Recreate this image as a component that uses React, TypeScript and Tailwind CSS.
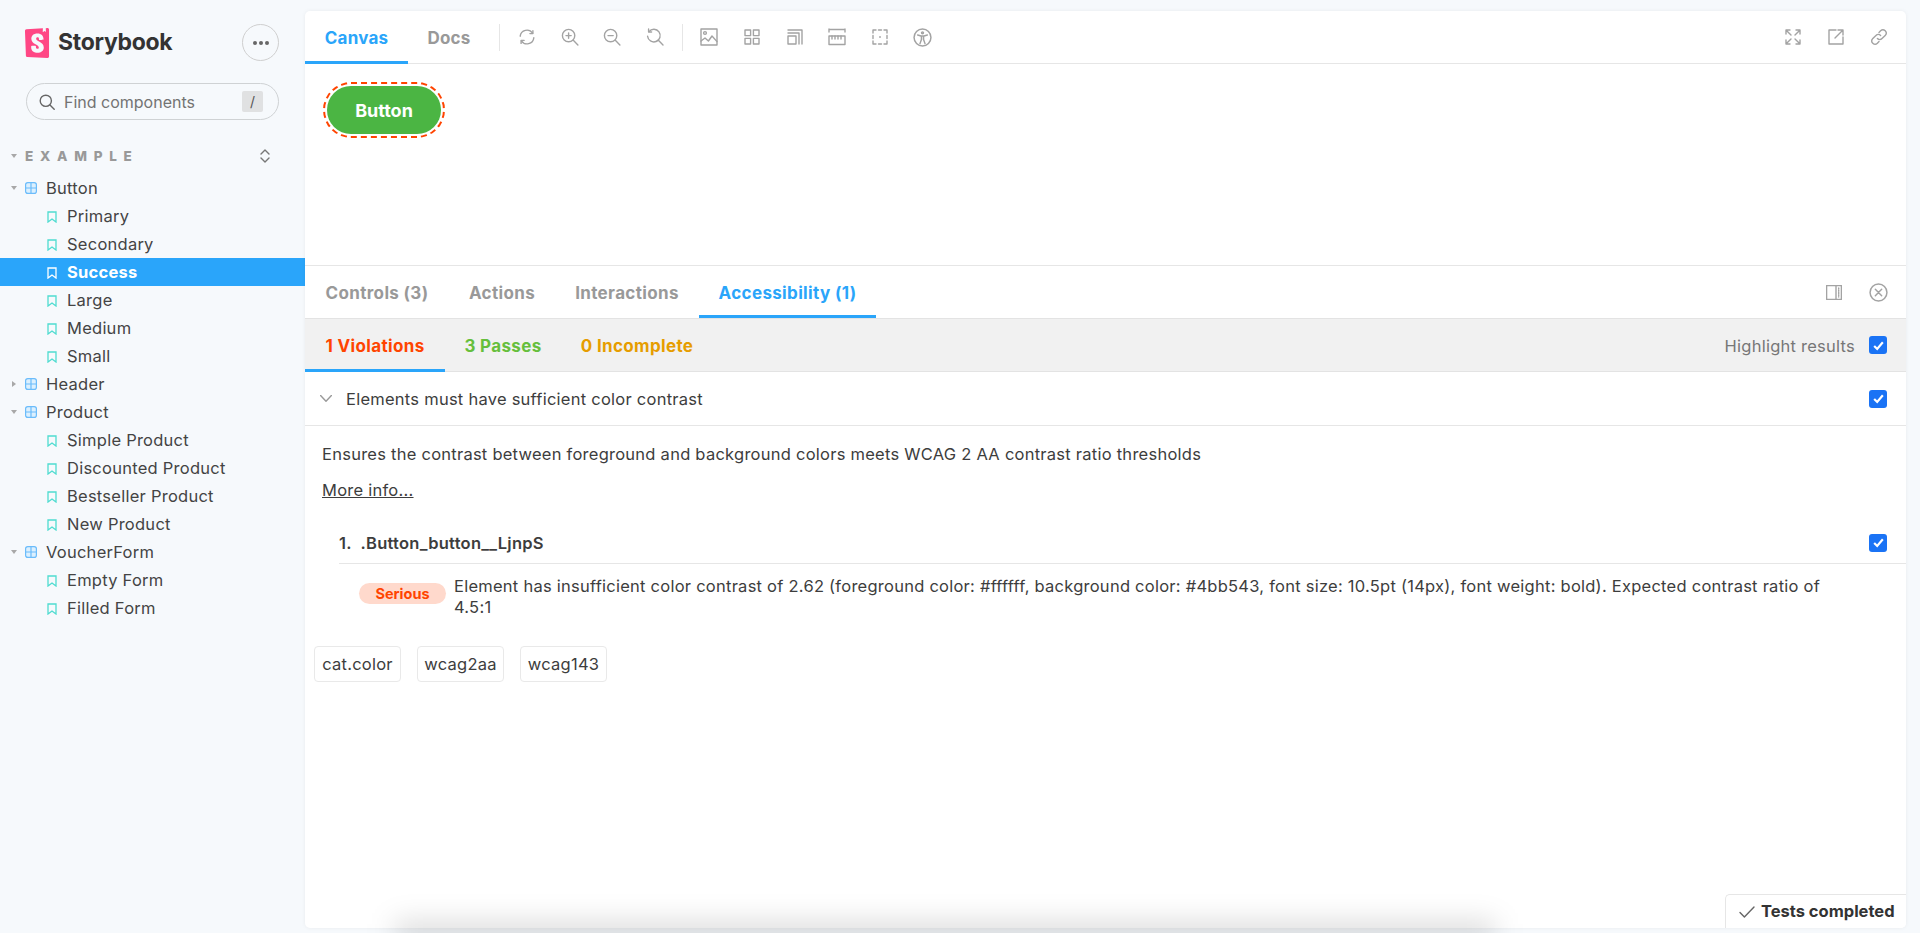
import { SiStorybook } from "react-icons/si";
import type { ReactNode } from "react";

const stroke = {
  fill: "none",
  stroke: "currentColor",
  strokeWidth: 1.4,
  strokeLinecap: "round" as const,
  strokeLinejoin: "round" as const,
};

function Ico({ children, className = "w-[18px] h-[18px]" }: { children: ReactNode; className?: string }) {
  return (
    <svg viewBox="0 0 18 18" className={className} {...stroke}>
      {children}
    </svg>
  );
}

const toolbarLeft: ReactNode[] = [
  <Ico key="sync">
    <path d="M2.2 8.2A6.8 6.8 0 0 1 14.6 5.2M15.8 9.8A6.8 6.8 0 0 1 3.4 12.8" />
    <path d="M14.9 2.6v3h-3M3.1 15.4v-3h3" />
  </Ico>,
  <Ico key="zoomin">
    <circle cx="7.6" cy="7.6" r="6.2" />
    <path d="M12.3 12.3l4.6 4.6M7.6 5v5.2M5 7.6h5.2" />
  </Ico>,
  <Ico key="zoomout">
    <circle cx="7.6" cy="7.6" r="6.2" />
    <path d="M12.3 12.3l4.6 4.6M5 7.6h5.2" />
  </Ico>,
  <Ico key="zoomreset">
    <path d="M3 3.6A6.3 6.3 0 1 1 1.6 8.2" />
    <path d="M2.6 1v3h3M12.6 12.6l4.4 4.4" />
  </Ico>,
];

const toolbarMid: ReactNode[] = [
  <Ico key="photo">
    <rect x="1" y="1" width="16" height="16" />
    <circle cx="5" cy="5" r="1.4" />
    <path d="M1 13l4-3 3.4 3L12 8l5 5.6" />
  </Ico>,
  <Ico key="grid">
    <rect x="2" y="2" width="5.6" height="5.6" />
    <rect x="10.4" y="2" width="5.6" height="5.6" />
    <rect x="2" y="10.4" width="5.6" height="5.6" />
    <rect x="10.4" y="10.4" width="5.6" height="5.6" />
  </Ico>,
  <Ico key="outline">
    <rect x="2" y="8" width="8" height="8" />
    <path d="M2 5h11v11M2 2h14v14" />
  </Ico>,
  <Ico key="ruler">
    <path d="M1 1.5h16M1 1v3M17 1v3" />
    <rect x="1" y="8" width="16" height="8.5" />
    <path d="M4 8v3M7 8v3M10 8v3M13 8v3" />
  </Ico>,
  <Ico key="measure">
    <path d="M2 5V2h3M7.5 2h3M13 2h3v3M16 7.5v3M16 13v3h-3M10.5 16h-3M5 16H2v-3M2 10.5v-3M8.6 9h.8" />
  </Ico>,
  <Ico key="a11y" className="w-[19px] h-[19px]">
    <circle cx="9" cy="9" r="8" />
    <circle cx="9" cy="4.6" r="0.9" />
    <path d="M4.4 6.6L7.6 7.6h2.8l3.2-1M8 7.8v3l-1.4 4M10 7.8v3l1.4 4" />
  </Ico>,
];

const toolbarRight: ReactNode[] = [
  <Ico key="full">
    <path d="M2 6V2h4M12 2h4v4M16 12v4h-4M6 16H2v-4M2.4 2.4L7 7M15.6 2.4L11 7M15.6 15.6L11 11M2.4 15.6L7 11" />
  </Ico>,
  <Ico key="share">
    <path d="M9 2H2v14h14V9M11 2h5v5M16 2L8 10" />
  </Ico>,
  <Ico key="link">
    <path d="M7.4 10.6a3.2 3.2 0 0 0 4.6 0l3.2-3.2a3.2 3.2 0 0 0-4.6-4.6L9 4.4" />
    <path d="M10.6 7.4a3.2 3.2 0 0 0-4.6 0l-3.2 3.2a3.2 3.2 0 0 0 4.6 4.6L9 13.6" />
  </Ico>,
];

function Caret({ open = true }: { open?: boolean }) {
  return (
    <span
      className={
        open
          ? "w-0 h-0 border-x-[3.5px] border-x-transparent border-t-[4px] border-t-[#a8a8a8]"
          : "w-0 h-0 ml-[1px] border-y-[3.5px] border-y-transparent border-l-[4px] border-l-[#a8a8a8]"
      }
    />
  );
}

function ComponentRow({ label, open = true }: { label: string; open?: boolean }) {
  return (
    <div className="h-[28px] flex items-center text-[16.5px] tracking-[0.25px] text-[#444]">
      <span className="w-[25px] pl-[11px] flex items-center">
        <Caret open={open} />
      </span>
      <svg viewBox="0 0 12 12" className="w-[12px] h-[12px] mr-[9px] text-[#6bbcfb]">
        <rect x="0.6" y="0.6" width="10.8" height="10.8" rx="2.2" fill="#dcf0fe" stroke="currentColor" strokeWidth="1.2" />
        <path d="M6 1v10M1 6h10" stroke="currentColor" strokeWidth="1.2" />
      </svg>
      {label}
    </div>
  );
}

function StoryRow({ label, active = false }: { label: string; active?: boolean }) {
  return (
    <div
      className={
        active
          ? "h-[28px] flex items-center pl-[47px] text-[16.5px] tracking-[0.25px] font-bold text-white bg-[#2aa5fa]"
          : "h-[28px] flex items-center pl-[47px] text-[16.5px] tracking-[0.25px] text-[#444]"
      }
    >
      <svg
        viewBox="0 0 10 12"
        className={active ? "w-[10px] h-[12px] mr-[10px] mt-[2px] text-white" : "w-[10px] h-[12px] mr-[10px] mt-[2px] text-[#4fdcd0]"}
      >
        <path d="M1 1h8v10L5 8l-4 3z" fill="none" stroke="currentColor" strokeWidth="1.3" />
      </svg>
      {label}
    </div>
  );
}

function Checkbox() {
  return (
    <span className="w-[18px] h-[18px] rounded-[3px] bg-[#1a73f5] flex items-center justify-center">
      <svg viewBox="0 0 12 12" className="w-[13px] h-[13px]">
        <path d="M2 6.4L4.8 9.2 10 3" fill="none" stroke="white" strokeWidth="2" />
      </svg>
    </span>
  );
}

function Sidebar() {
  return (
    <aside className="w-[305px] shrink-0 h-full">
      <div className="flex items-center justify-between pl-[22px] pr-[26px] pt-[24px]">
        <div className="flex items-center gap-[6px]">
          <SiStorybook className="w-[30px] h-[30px] text-[#ff4785]" />
          <span className="text-[23px] font-bold text-[#333] tracking-[-0.3px]">Storybook</span>
        </div>
        <button className="w-[37px] h-[37px] rounded-full border border-[#cfcfcf] flex items-center justify-center gap-[2px]">
          <span className="w-[4px] h-[4px] rounded-full bg-[#666]" />
          <span className="w-[4px] h-[4px] rounded-full bg-[#666]" />
          <span className="w-[4px] h-[4px] rounded-full bg-[#666]" />
        </button>
      </div>

      <div className="mx-[26px] mt-[22px] h-[37px] rounded-full border border-[#cfd2d4] flex items-center pl-[12px] pr-[15px]">
        <svg viewBox="0 0 16 16" className="w-[16px] h-[16px] text-[#666] mr-[9px]" {...stroke}>
          <circle cx="6.8" cy="6.8" r="5.6" />
          <path d="M11 11l4.2 4.2" />
        </svg>
        <span className="text-[16px] text-[#737373] flex-1">Find components</span>
        <span className="w-[21px] h-[21px] bg-[#e0e1e2] rounded-[2px] flex items-center justify-center text-[14px] text-[#555]">/</span>
      </div>

      <div className="flex items-center h-[20px] mt-[26px] pl-[11px] pr-[35px]">
        <Caret />
        <span className="ml-[8px] flex-1 text-[13.5px] font-extrabold tracking-[0.5em] text-[#999]">EXAMPLE</span>
        <svg viewBox="0 0 10 14" className="w-[10px] h-[14px] text-[#777]" {...stroke}>
          <path d="M1 5l4-4 4 4M1 9l4 4 4-4" />
        </svg>
      </div>

      <div className="mt-[8px]">
        <ComponentRow label="Button" />
        <StoryRow label="Primary" />
        <StoryRow label="Secondary" />
        <StoryRow label="Success" active />
        <StoryRow label="Large" />
        <StoryRow label="Medium" />
        <StoryRow label="Small" />
        <ComponentRow label="Header" open={false} />
        <ComponentRow label="Product" />
        <StoryRow label="Simple Product" />
        <StoryRow label="Discounted Product" />
        <StoryRow label="Bestseller Product" />
        <StoryRow label="New Product" />
        <ComponentRow label="VoucherForm" />
        <StoryRow label="Empty Form" />
        <StoryRow label="Filled Form" />
      </div>
    </aside>
  );
}

function Toolbar() {
  return (
    <div className="h-[53px] shrink-0 border-b border-[#e6e6e6] flex items-stretch text-[#a3a3a3]">
      <div className="relative w-[103px] pt-[3px] flex items-center justify-center text-[17px] tracking-[0.2px] font-bold text-[#2aa5fa]">
        Canvas
        <span className="absolute left-0 right-0 bottom-[-1px] h-[3px] bg-[#2aa5fa]" />
      </div>
      <div className="w-[82px] pt-[3px] flex items-center justify-center text-[17px] tracking-[0.2px] font-bold text-[#999]">Docs</div>
      <div className="w-px h-[27px] mt-[13px] ml-[9px] bg-[#e6e6e6]" />
      <div className="flex items-center ml-[6px]">
        {toolbarLeft.map((icon, i) => (
          <span key={i} className="w-[42.5px] flex justify-center">
            {icon}
          </span>
        ))}
      </div>
      <div className="w-px h-[27px] mt-[13px] ml-[6px] bg-[#e6e6e6]" />
      <div className="flex items-center ml-[5px]">
        {toolbarMid.map((icon, i) => (
          <span key={i} className="w-[42.7px] flex justify-center">
            {icon}
          </span>
        ))}
      </div>
      <div className="flex items-center ml-auto pr-[6px]">
        {toolbarRight.map((icon, i) => (
          <span key={i} className="w-[43px] flex justify-center">
            {icon}
          </span>
        ))}
      </div>
    </div>
  );
}

function AddonPanel() {
  return (
    <div className="flex-1 flex flex-col min-h-0 relative">
      <div className="h-[53px] shrink-0 border-t border-[#e6e6e6] flex items-stretch text-[17px] tracking-[0.35px] font-bold text-[#999]">
        <div className="w-[144px] pt-[4px] flex items-center justify-center">Controls (3)</div>
        <div className="w-[106px] pt-[4px] flex items-center justify-center">Actions</div>
        <div className="w-[144px] pt-[4px] flex items-center justify-center">Interactions</div>
        <div className="relative w-[177px] pt-[4px] flex items-center justify-center text-[#2aa5fa]">
          Accessibility (1)
          <span className="absolute left-0 right-0 bottom-0 h-[3px] bg-[#2aa5fa]" />
        </div>
        <div className="ml-auto flex items-center gap-[27px] pr-[18px] text-[#a3a3a3]">
          <svg viewBox="0 0 16 15" className="w-[16px] h-[15px]" {...stroke}>
            <rect x="0.6" y="0.6" width="14.8" height="13.8" />
            <path d="M10 1v13" />
            <path d="M12.7 3v9" strokeDasharray="1 1.2" />
          </svg>
          <svg viewBox="0 0 18 18" className="w-[19px] h-[19px]" {...stroke}>
            <circle cx="9" cy="9" r="8" />
            <path d="M6 6l6 6M12 6l-6 6" />
          </svg>
        </div>
      </div>

      <div className="h-[54px] shrink-0 bg-[#f1f1f1] border-y border-[#e3e3e3] flex items-stretch text-[17px] tracking-[0.35px] font-bold">
        <div className="relative w-[140px] pt-[4px] flex items-center justify-center text-[#ff4400]">
          1 Violations
          <span className="absolute left-0 right-0 bottom-[-1px] h-[3px] bg-[#2aa5fa]" />
        </div>
        <div className="w-[116px] pt-[4px] flex items-center justify-center text-[#66bf3c]">3 Passes</div>
        <div className="w-[152px] pt-[4px] flex items-center justify-center text-[#e69d00]">0 Incomplete</div>
        <div className="ml-auto flex items-center gap-[14px] pr-[19px] text-[16.5px] tracking-[0.25px] font-normal text-[#777]">
          <span className="mt-[2px]">Highlight results</span>
          <Checkbox />
        </div>
      </div>

      <div className="h-[54px] shrink-0 border-b border-[#e6e6e6] flex items-center pl-[15px] pr-[19px] text-[16.5px] tracking-[0.25px] text-[#3d3d3d]">
        <svg viewBox="0 0 12 7" className="w-[12px] h-[7px] mr-[14px] text-[#999]" {...stroke}>
          <path d="M0.6 0.6L6 6.2l5.4-5.6" />
        </svg>
        <span className="flex-1 mt-[2px]">Elements must have sufficient color contrast</span>
        <Checkbox />
      </div>

      <div className="pl-[17px] pt-[16px] text-[16.5px] tracking-[0.25px] text-[#3d3d3d]">
        <p className="leading-[24px]">
          Ensures the contrast between foreground and background colors meets WCAG 2 AA contrast ratio thresholds
        </p>
        <a className="block mt-[12px] leading-[24px] underline">More info...</a>
      </div>

      <div className="ml-[34px] mt-[20px] text-[#3d3d3d]">
        <div className="h-[42px] flex items-center border-b border-[#e6e6e6] pr-[19px] text-[16.5px] tracking-[0.25px] font-semibold">
          <span className="flex-1 mt-[2px]">1.&nbsp;&nbsp;.Button_button__LjnpS</span>
          <Checkbox />
        </div>
        <div className="flex items-start pl-[20px] pt-[12px] pr-[60px]">
          <span className="w-[87px] h-[21px] mt-[7px] shrink-0 rounded-full bg-[#ffd9cc] flex items-center justify-center text-[14.5px] font-bold text-[#ff4400]">
            Serious
          </span>
          <p className="ml-[8px] text-[16.5px] tracking-[0.25px] leading-[21px]">
            Element has insufficient color contrast of 2.62 (foreground color: #ffffff, background color: #4bb543, font
            size: 10.5pt (14px), font weight: bold). Expected contrast ratio of 4.5:1
          </p>
        </div>
      </div>

      <div className="flex gap-[16px] ml-[9px] mt-[28px]">
        {["cat.color", "wcag2aa", "wcag143"].map((tag) => (
          <span
            key={tag}
            className="h-[36px] w-[87px] flex items-center justify-center rounded-[4px] border border-[#e9e9e9] text-[16.5px] tracking-[0.25px] text-[#3d3d3d]"
          >
            {tag}
          </span>
        ))}
      </div>

      <div className="absolute right-0 bottom-0 w-[181px] h-[34px] bg-white border-t border-l border-[#e6e6e6] rounded-tl-[5px] flex items-center pl-[13px] text-[16.5px] font-bold text-[#333]">
        <svg viewBox="0 0 16 12" className="w-[16px] h-[12px] mr-[6px] text-[#666]" {...stroke}>
          <path d="M1 6.4L5.4 11 15 1" />
        </svg>
        Tests completed
      </div>
    </div>
  );
}

export default function App() {
  return (
    <div className="relative w-[1920px] h-[933px] overflow-hidden flex bg-[#f6f9fc] font-['Inter',sans-serif]">
      <Sidebar />
      <div className="flex-1 pt-[11px] pb-[5px] pr-[14px] min-w-0">
        <main className="relative h-full bg-white rounded-[5px] shadow-[0_0_4px_rgba(0,0,0,0.06)] flex flex-col overflow-hidden">
          <Toolbar />
          <div className="h-[201px] shrink-0 pt-[22px] pl-[22px]">
            <button className="w-[114px] h-[48px] rounded-full bg-[#4bb543] text-white text-[18px] font-bold outline-[2.5px] outline-dashed outline-offset-[2.5px] outline-[#ff4400]">
              Button
            </button>
          </div>
          <AddonPanel />
        </main>
      </div>
      <div className="absolute left-[395px] top-[922px] w-[1100px] h-[24px] bg-black/15 blur-[14px] pointer-events-none" />
    </div>
  );
}
